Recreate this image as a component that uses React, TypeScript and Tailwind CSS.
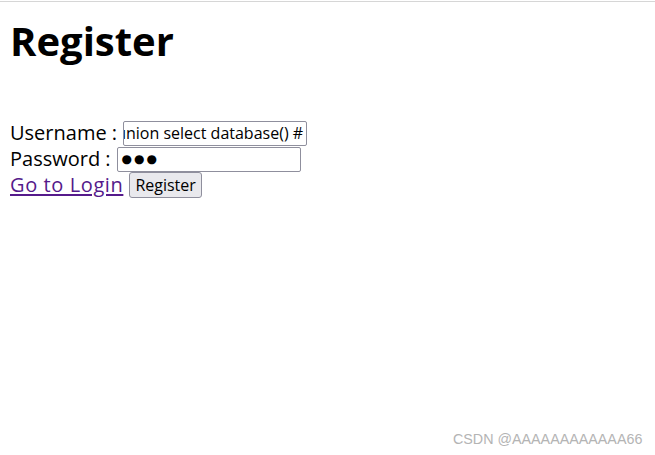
import React from 'react';

const font = { fontFamily: '"Open Sans", "Noto Sans", sans-serif' };

const App = () => {
  return (
    <div className="relative h-[455px] w-[655px] overflow-hidden bg-white text-black" style={font}>
      <div className="mt-px border-t border-[#d6d6d6]" />
      <div className="px-[10px]">
        <h1 className="mt-[12px] text-[40px] font-bold leading-[53px]">Register</h1>
        <form className="mt-[53px] text-[20px] leading-[26px]">
          <div className="flex h-[26px] items-center">
            <span>Username :</span>
            <div className="ml-[6px] flex h-[25px] w-[184px] items-center justify-end overflow-hidden whitespace-nowrap rounded-[2px] border border-[#8f8f9d] px-[3px] text-[16px]">
              admin' union select database() #
            </div>
          </div>
          <div className="flex h-[26px] items-center">
            <span>Password :</span>
            <div
              className="ml-[6px] flex h-[25px] w-[184px] items-center overflow-hidden whitespace-nowrap rounded-[2px] border border-[#8f8f9d] px-[4px] text-[12px] tracking-[2px]"
              style={{ fontFamily: '"DejaVu Sans", sans-serif' }}
            >
              ●●●
            </div>
          </div>
          <div className="flex h-[26px] items-center">
            <a href="#" className="tracking-[0.6px] text-[#551a8b] underline underline-offset-2">
              Go to Login
            </a>
            <button
              type="button"
              className="ml-[6px] h-[26px] rounded-[3px] border border-[#8f8f9d] bg-[#e9e9ed] px-[5px] text-[16px] leading-[20px]"
            >
              Register
            </button>
          </div>
        </form>
      </div>
      <div
        className="absolute left-[453px] top-[429px] text-[14.3px] text-[#b4b4b4]"
        style={{ fontFamily: '"Liberation Sans", Arial, sans-serif', textShadow: '0 1px 1px #fff' }}
      >
        CSDN @AAAAAAAAAAAA66
      </div>
    </div>
  );
};

export default App;
